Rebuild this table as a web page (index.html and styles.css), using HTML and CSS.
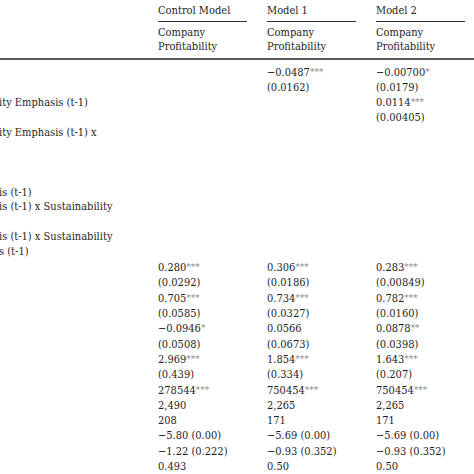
FILE: index.html
```html
<!DOCTYPE html>
<html>
<head>
<meta charset="utf-8">
<link rel="stylesheet" href="styles.css">
</head>
<body>
<div class="table">
  <div class="row models">
    <div></div>
    <div class="m">Control Model</div>
    <div class="m">Model 1</div>
    <div class="m">Model 2</div>
  </div>
  <div class="row dv">
    <div></div>
    <div>Company<br>Profitability</div>
    <div>Company<br>Profitability</div>
    <div>Company<br>Profitability</div>
  </div>
  <div class="rule"></div>
  <div class="body upper">
    <div class="row"><div class="lab"></div><div></div><div>−0.0487<span class="s">***</span></div><div>−0.00700<span class="s">*</span></div></div>
    <div class="row"><div class="lab"></div><div></div><div>(0.0162)</div><div>(0.0179)</div></div>
    <div class="row"><div class="lab">ity Emphasis (t-1)</div><div></div><div></div><div>0.0114<span class="s">***</span></div></div>
    <div class="row"><div class="lab"></div><div></div><div></div><div>(0.00405)</div></div>
    <div class="row"><div class="lab">ity Emphasis (t-1) x</div><div></div><div></div><div></div></div>
    <div class="row"><div class="lab"></div><div></div><div></div><div></div></div>
    <div class="row"><div class="lab"></div><div></div><div></div><div></div></div>
    <div class="row"><div class="lab"></div><div></div><div></div><div></div></div>
    <div class="row"><div class="lab">is (t-1)</div><div></div><div></div><div></div></div>
    <div class="row"><div class="lab">is (t-1) x Sustainability</div><div></div><div></div><div></div></div>
    <div class="row"><div class="lab"></div><div></div><div></div><div></div></div>
    <div class="row"><div class="lab">is (t-1) x Sustainability</div><div></div><div></div><div></div></div>
    <div class="row"><div class="lab">s (t-1)</div><div></div><div></div><div></div></div>
  </div>
  <div class="body lower">
    <div class="row"><div class="lab"></div><div>0.280<span class="s">***</span></div><div>0.306<span class="s">***</span></div><div>0.283<span class="s">***</span></div></div>
    <div class="row"><div class="lab"></div><div>(0.0292)</div><div>(0.0186)</div><div>(0.00849)</div></div>
    <div class="row"><div class="lab"></div><div>0.705<span class="s">***</span></div><div>0.734<span class="s">***</span></div><div>0.782<span class="s">***</span></div></div>
    <div class="row"><div class="lab"></div><div>(0.0585)</div><div>(0.0327)</div><div>(0.0160)</div></div>
    <div class="row"><div class="lab"></div><div>−0.0946<span class="s">*</span></div><div>0.0566</div><div>0.0878<span class="s">**</span></div></div>
    <div class="row"><div class="lab"></div><div>(0.0508)</div><div>(0.0673)</div><div>(0.0398)</div></div>
    <div class="row"><div class="lab"></div><div>2.969<span class="s">***</span></div><div>1.854<span class="s">***</span></div><div>1.643<span class="s">***</span></div></div>
    <div class="row"><div class="lab"></div><div>(0.439)</div><div>(0.334)</div><div>(0.207)</div></div>
    <div class="row"><div class="lab"></div><div>278544<span class="s">***</span></div><div>750454<span class="s">***</span></div><div>750454<span class="s">***</span></div></div>
    <div class="row"><div class="lab"></div><div>2,490</div><div>2,265</div><div>2,265</div></div>
    <div class="row"><div class="lab"></div><div>208</div><div>171</div><div>171</div></div>
    <div class="row"><div class="lab"></div><div>−5.80 (0.00)</div><div>−5.69 (0.00)</div><div>−5.69 (0.00)</div></div>
    <div class="row"><div class="lab"></div><div>−1.22 (0.222)</div><div>−0.93 (0.352)</div><div>−0.93 (0.352)</div></div>
    <div class="row"><div class="lab"></div><div>0.493</div><div>0.50</div><div>0.50</div></div>
  </div>
</div>
</body>
</html>
```
FILE: styles.css
```css
html, body {
  margin: 0;
  padding: 0;
  background: #fff;
}
body {
  font-family: "DejaVu Serif Condensed", "DejaVu Serif", "Liberation Serif", serif;
  font-stretch: condensed;
  font-size: 11px;
  color: #1e1e1e;
  overflow: hidden;
  width: 474px;
  height: 474px;
}
.table {
  width: 474px;
}
.row {
  display: grid;
  grid-template-columns: 138px 89px 89px 89px;
  column-gap: 20px;
  white-space: nowrap;
}
.models {
  line-height: 15px;
}
.models .m {
  padding-top: 3px;
  padding-bottom: 3px;
  border-bottom: 1px solid #333;
}
.dv {
  line-height: 14.5px;
  padding-top: 3.5px;
  padding-bottom: 3.5px;
}
.rule {
  height: 2px;
  background: #5a5a5a;
}
.upper {
  padding-top: 6px;
}
.upper .row {
  height: 14.95px;
  line-height: 14.95px;
}
.lower .row {
  height: 15.3px;
  line-height: 15.3px;
}
.lab {
  margin-left: -1px;
}
.s {
  font-size: 10px;
  color: #8a8a8a;
  vertical-align: 1px;
  line-height: 0;
}
```
